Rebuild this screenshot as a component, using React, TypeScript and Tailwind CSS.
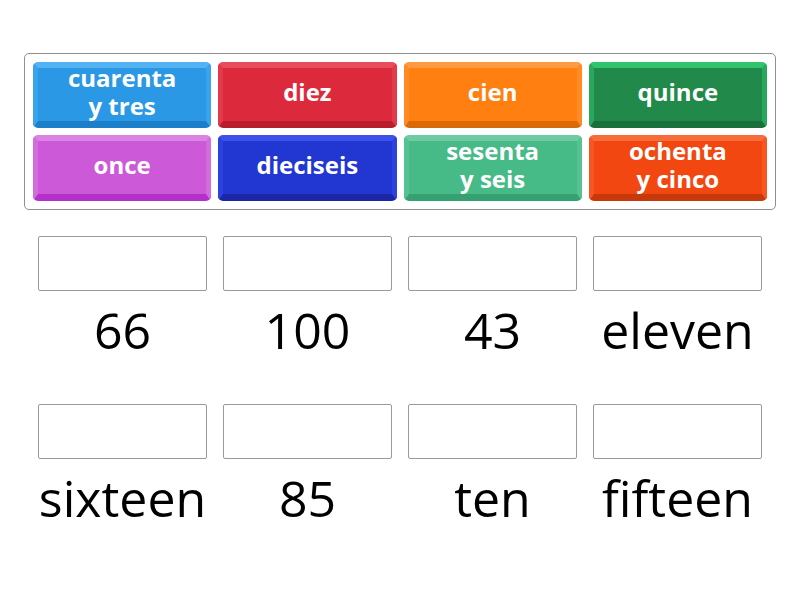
const TILES = [
  { text: ["cuarenta", "y tres"], cls: "bg-[#2a98e4] border-t-[#52b3f2] border-x-[#3aa3ec] border-b-[#1c7fc9]" },
  { text: ["diez"], cls: "bg-[#dc2a3c] border-t-[#e84d5c] border-x-[#e23a4a] border-b-[#b81d2e]" },
  { text: ["cien"], cls: "bg-[#ff7f10] border-t-[#ff9a42] border-x-[#ff8a26] border-b-[#d96a08]" },
  { text: ["quince"], cls: "bg-[#218a4a] border-t-[#30c46c] border-x-[#28a85a] border-b-[#1a703b]" },
  { text: ["once"], cls: "bg-[#cc5ad8] border-t-[#da83e3] border-x-[#d26ddd] border-b-[#b52fcb]" },
  { text: ["dieciseis"], cls: "bg-[#2236d2] border-t-[#3d52ea] border-x-[#2c42de] border-b-[#1a28a8]" },
  { text: ["sesenta", "y seis"], cls: "bg-[#46ba87] border-t-[#6fcca2] border-x-[#56c293] border-b-[#35a070]" },
  { text: ["ochenta", "y cinco"], cls: "bg-[#f24710] border-t-[#f86c3c] border-x-[#f55624] border-b-[#c7380a]" },
];

const ROWS = [
  ["66", "100", "43", "eleven"],
  ["sixteen", "85", "ten", "fifteen"],
];

export default function App() {
  return (
    <div className="w-[800px] h-[600px] bg-white font-['Open_Sans','Noto_Sans',sans-serif] overflow-hidden">
      <div className="pt-[53px] pl-[24px]">
        <div className="w-[752px] border border-[#8f8f8f] rounded-[5px] p-[8px]">
          <div className="grid grid-cols-4 gap-[7px]">
            {TILES.map((t, i) => (
              <div
                key={i}
                className={`h-[66px] rounded-[5px] border-solid border-t-[6px] border-x-[5px] border-b-[7px] pb-[6px] flex items-center justify-center text-center text-white font-bold text-[24px] leading-[28px] ${t.cls}`}
              >
                <p>
                  {t.text[0]}
                  {t.text[1] && <br />}
                  {t.text[1]}
                </p>
              </div>
            ))}
          </div>
        </div>
      </div>

      <div className="pl-[38px] pt-[26px] flex flex-col gap-[41px]">
        {ROWS.map((row, r) => (
          <div key={r} className="grid grid-cols-[169px_169px_169px_169px] gap-x-[16px]">
            {row.map((label) => (
              <div key={label} className="flex flex-col items-center">
                <div className="w-full h-[55px] border border-[#9a9a9a] rounded-[2px] bg-white" />
                <div className="mt-[7px] h-[65px] text-[50px] leading-[65px] text-black whitespace-nowrap">
                  {label}
                </div>
              </div>
            ))}
          </div>
        ))}
      </div>
    </div>
  );
}
